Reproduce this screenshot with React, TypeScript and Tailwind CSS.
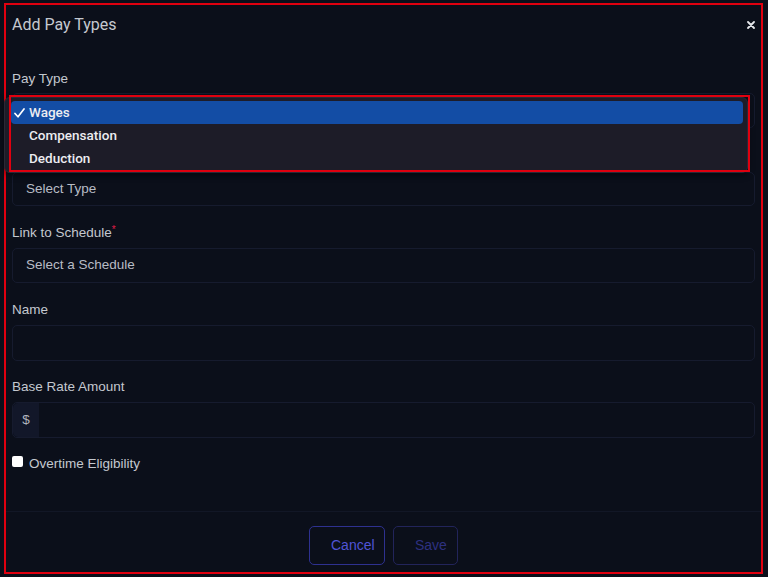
import React from "react";

const fields = "rounded-[5px] border border-[#161b2e] flex items-center pl-[13px] text-[13.5px] text-[#b8bcc5]";

function Label({ text, required }: { text: string; required?: boolean }) {
  return (
    <div className="h-[20px] leading-[22px] text-[13.5px] text-[#c4c8cf]">
      {text}
      {required && <span className="text-[10px] text-[#e11d48] align-top leading-[16px]">*</span>}
    </div>
  );
}

const options = ["Wages", "Compensation", "Deduction"];

export default function App() {
  return (
    <div className="w-[768px] h-[577px] bg-[#0b0f1a] pt-[3px] pb-[3px] pl-[4px] pr-[5px] font-['Liberation_Sans',Arial,sans-serif]">
      <div className="h-full border-2 border-[#e0000f] flex flex-col relative">
        <div className="flex-1 px-[6px]">
          <div className="h-[38px] pt-[2px] flex items-center justify-between">
            <span className="font-['Roboto',Arial,sans-serif] text-[16px] text-[#c5c9d0]">Add Pay Types</span>
            <button className="w-[8px] h-[8px] flex items-center justify-center">
              <svg width="8" height="8" viewBox="0 0 8 8">
                <path d="M1 1L7 7M7 1L1 7" stroke="#e5e7eb" strokeWidth="1.8" strokeLinecap="round" />
              </svg>
            </button>
          </div>

          <div className="mt-[25px]">
            <Label text="Pay Type" />
            <div className={`${fields} mt-[5px] h-[35px]`} />
          </div>

          <div className={`${fields} mt-[44px] h-[34px]`}>Select Type</div>

          <div className="mt-[16px]">
            <Label text="Link to Schedule" required />
            <div className={`${fields} mt-[6px] h-[35px]`}>Select a Schedule</div>
          </div>

          <div className="mt-[16px]">
            <Label text="Name" />
            <div className={`${fields} mt-[6px] h-[36px]`} />
          </div>

          <div className="mt-[15px]">
            <Label text="Base Rate Amount" />
            <div className="mt-[6px] h-[36px] flex rounded-[5px] border border-[#161b2e]">
              <div className="w-[26px] bg-[#121729] rounded-l-[5px] flex items-center justify-center text-[13.5px] text-[#b0b4bd]">
                $
              </div>
            </div>
          </div>

          <label className="mt-[16px] h-[20px] flex items-start gap-[6px]">
            <span className="mt-[2px] w-[11px] h-[11px] rounded-[2px] bg-white" />
            <span className="text-[13.5px] leading-[20px] text-[#c4c8cf]">Overtime Eligibility</span>
          </label>
        </div>

        <div className="border-t border-[#121726] pt-[14px] pb-[7px] flex justify-center gap-[8px]">
          <button className="h-[39px] w-[76px] pl-[21px] pr-[13px] text-left rounded-[5px] border border-[#2e3190] text-[14px] text-[#5054d6]">
            Cancel
          </button>
          <button className="h-[39px] w-[65px] pl-[21px] pr-[13px] text-left rounded-[5px] border border-[#22245a] text-[14px] text-[#2e3180]">
            Save
          </button>
        </div>

        {/* open native select list */}
        <div className="absolute left-[-2px] top-[92px] w-[744px] h-[76px] rounded-[6px] bg-[#1d1c28] border border-[#2a2936] shadow-[0_2px_6px_rgba(0,0,0,0.5)] pl-[6px] pr-[4px] pt-[3px] font-['Roboto',Arial,sans-serif]">
          {options.map((o, i) => (
            <div
              key={o}
              className={`relative h-[23px] flex items-center pl-[18px] text-[13.5px] font-medium text-[#ececf1] rounded-[4px] ${i === 0 ? "bg-[#134da5]" : ""}`}
            >
              {i === 0 && (
                <svg className="absolute left-[3px] top-[7px]" width="11" height="10" viewBox="0 0 11 10">
                  <path d="M1 5.5L4 8.8L10 1" fill="none" stroke="#ffffff" strokeWidth="1.7" strokeLinecap="round" strokeLinejoin="round" />
                </svg>
              )}
              {o}
            </div>
          ))}
        </div>
        <div className="absolute left-[3px] top-[90px] w-[741px] h-[77px] border-2 border-[#e0000f] pointer-events-none" />
      </div>
    </div>
  );
}
